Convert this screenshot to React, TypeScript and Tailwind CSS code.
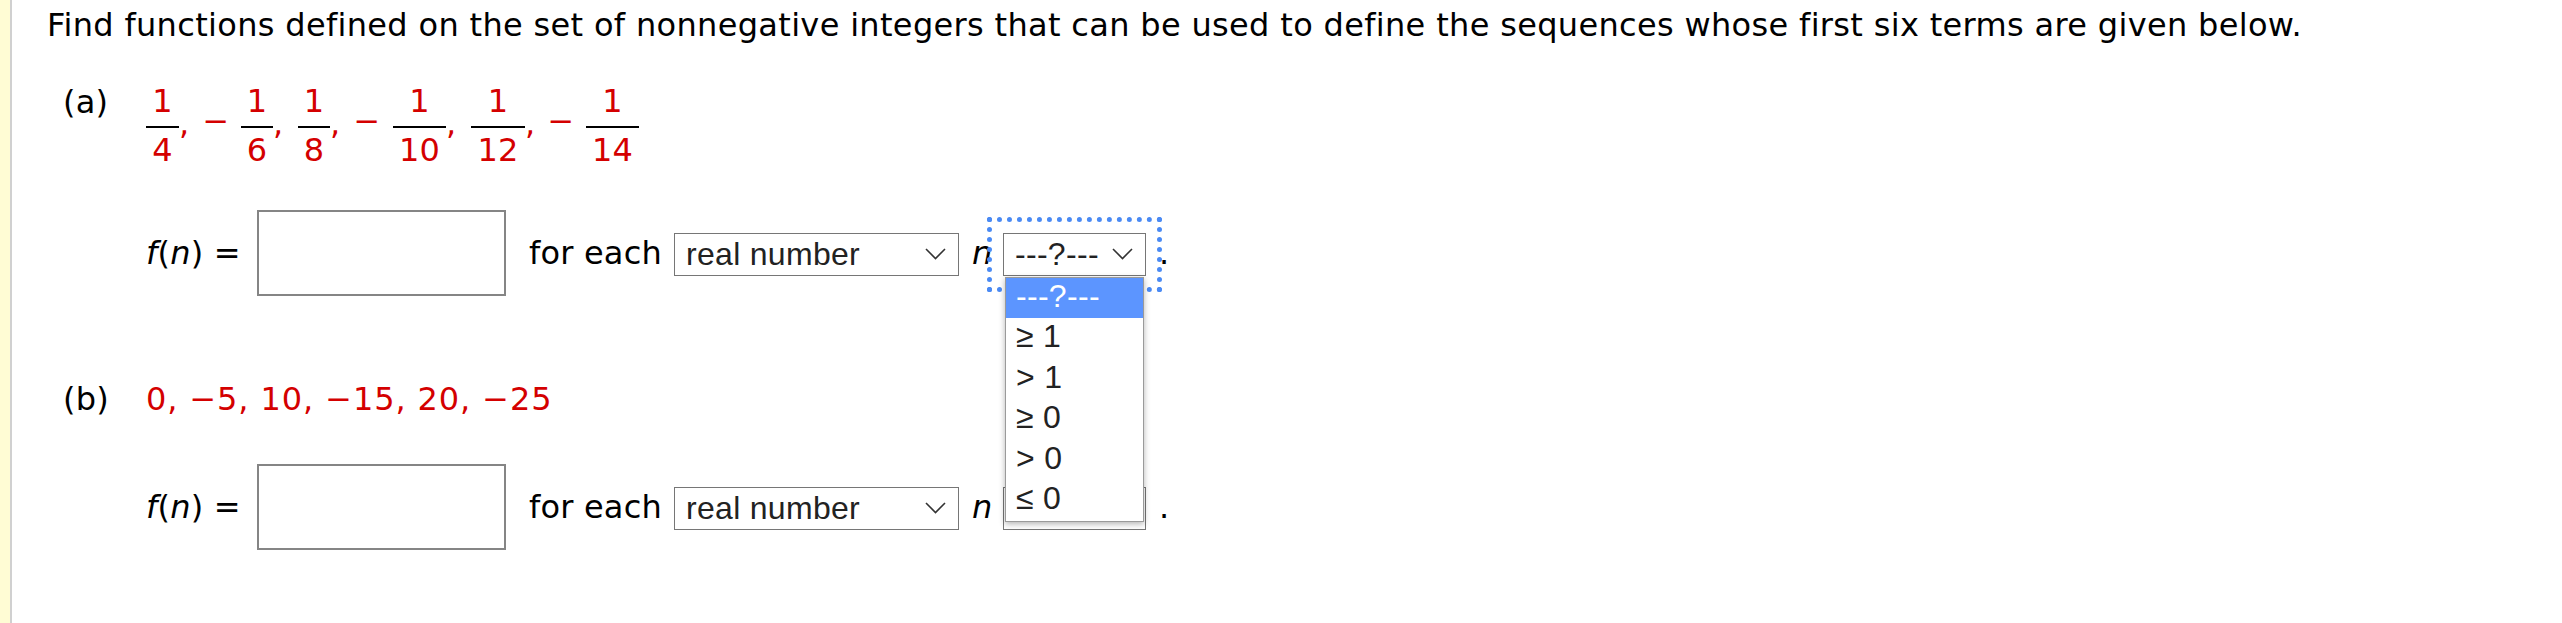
import { type ReactNode } from "react";

const RED = "text-[#d40000]";
const selectFont =
  "font-['Liberation_Sans',Arial,sans-serif] text-[32px] leading-[36px] tracking-[0.3px] text-[#222]";

const options = ["---?---", "≥ 1", "> 1", "≥ 0", "> 0", "≤ 0"];

const Chevron = () => (
  <svg width="21" height="12" viewBox="0 0 21 12" fill="none" className="shrink-0">
    <path d="M1 1L10.5 10.5L20 1" stroke="#333" strokeWidth="1.6" />
  </svg>
);

interface FracProps {
  den: string;
  width: string;
  gap?: string;
}

const Frac = ({ den, width, gap = "" }: FracProps) => (
  <div className={`flex shrink-0 flex-col items-center ${width} ${gap}`}>
    <span className="h-[32px] leading-[32px]">1</span>
    <span className="mt-[9px] h-[2px] w-full bg-black" />
    <span className="mt-[6px] h-[32px] leading-[32px]">{den}</span>
  </div>
);

const Comma = () => (
  <span className="mt-[22px] w-[10px] shrink-0 leading-[32px]">,</span>
);

const Minus = ({ gap }: { gap: string }) => (
  <span className={`mt-[20px] flex w-[20px] shrink-0 justify-center leading-[32px] ${gap}`}>
    −
  </span>
);

interface SelectProps {
  width: string;
  label?: string;
  focused?: boolean;
  children?: ReactNode;
}

const Select = ({ width, label, focused, children }: SelectProps) => (
  <div
    className={`relative mt-[2px] flex h-[43px] shrink-0 items-center justify-between border border-[#767676] bg-white pl-[11px] pr-[12px] ${selectFont} ${width} ${
      focused
        ? "outline-[5px] outline-dotted outline-[#4a8af4] outline-offset-[11px]"
        : ""
    }`}
  >
    <span className="whitespace-nowrap">{label}</span>
    <Chevron />
    {children}
  </div>
);

// open dropdown of the focused select, lies over the row below
const OptionList = () => (
  <div className="absolute left-[1px] top-[43px] z-10 h-[245px] w-[139px] border border-[#9a9a9a] bg-white shadow-[0_2px_6px_rgba(0,0,0,0.3)]">
    {options.map((o, i) => (
      <div
        key={o}
        className={`h-[40.5px] whitespace-nowrap pl-[10px] ${
          i === 0 ? "bg-[#5c95ff] text-white" : ""
        }`}
      >
        {o}
      </div>
    ))}
  </div>
);

const AnswerRow = ({ className, open }: { className: string; open?: boolean }) => (
  <div className={`flex h-[86px] items-center leading-[32px] ${className}`}>
    <span className="ml-[99px] w-[111px] shrink-0 whitespace-nowrap">
      <i>f</i>(<i>n</i>) =
    </span>
    <div className="h-[86px] w-[249px] shrink-0 border-2 border-[#858585] bg-white" />
    <span className="w-[168px] shrink-0 whitespace-nowrap pl-[23px]">for each</span>
    <Select width="w-[285px]" label="real number" />
    <span className="w-[44px] shrink-0 pl-[13px] italic">n</span>
    {/* the lower one is hidden under the open list */}
    <Select width="w-[143px]" label={open ? "---?---" : ""} focused={open}>
      {open && <OptionList />}
    </Select>
    <span className="pl-[13px]">.</span>
  </div>
);

export default function App() {
  return (
    <div className="flex h-[623px] w-full bg-white font-['DejaVu_Sans',sans-serif] text-[32px] tracking-[0.2px] text-black">
      <div className="w-[12px] shrink-0 border-r-2 border-[#d0d0d0] bg-[#fffcd4]" />
      <div className="flex-1 pl-[35px] pt-[7px]">
        <p className="whitespace-nowrap leading-[36px] tracking-[0.33px]">
          Find functions defined on the set of nonnegative integers that can be used to define
          the sequences whose first six terms are given below.
        </p>

        {/* (a) */}
        <div className="mt-[42px] flex items-start">
          <span className="ml-[16px] mt-[1px] w-[83px] shrink-0 leading-[32px]">(a)</span>
          <div className={`flex items-start ${RED}`}>
            <Frac den="4" width="w-[33px]" />
            <Comma />
            <Minus gap="ml-[17px]" />
            <Frac den="6" width="w-[32px]" gap="ml-[15px]" />
            <Comma />
            <Frac den="8" width="w-[32px]" gap="ml-[15px]" />
            <Comma />
            <Minus gap="ml-[17px]" />
            <Frac den="10" width="w-[53px]" gap="ml-[16px]" />
            <Comma />
            <Frac den="12" width="w-[54px]" gap="ml-[15px]" />
            <Comma />
            <Minus gap="ml-[16px]" />
            <Frac den="14" width="w-[53px]" gap="ml-[15px]" />
          </div>
        </div>

        <AnswerRow className="mt-[44px]" open />

        {/* (b) */}
        <div className="mt-[87px] flex leading-[32px]">
          <span className="ml-[16px] w-[83px] shrink-0">(b)</span>
          <span className={`whitespace-nowrap tracking-[0.9px] ${RED}`}>
            0, −5, 10, −15, 20, −25
          </span>
        </div>

        <AnswerRow className="mt-[49px]" />
      </div>
    </div>
  );
}
